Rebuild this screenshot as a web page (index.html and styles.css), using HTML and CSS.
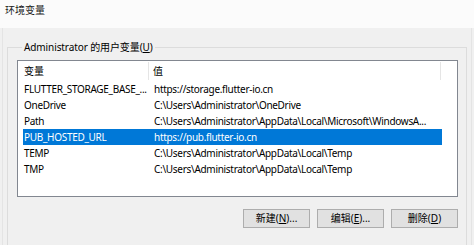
FILE: index.html
```html
<!DOCTYPE html>
<html lang="zh">
<head>
<meta charset="utf-8">
<title>环境变量</title>
<link rel="stylesheet" href="styles.css">
</head>
<body>
<div class="window">
  <div class="titlebar">环境变量</div>
  <div class="content">
    <fieldset class="group">
      <legend class="group-title">Administrator 的用户变量(<u>U</u>)</legend>
      <div class="list">
        <div class="list-header">
          <div class="col1">变量</div>
          <div class="col2">值</div>
          <div class="col-rest"></div>
        </div>
        <div class="row"><div class="col1">FLUTTER_STORAGE_BASE_...</div><div class="col2">https://storage.flutter-io.cn</div></div>
        <div class="row"><div class="col1">OneDrive</div><div class="col2">C:\Users\Administrator\OneDrive</div></div>
        <div class="row"><div class="col1">Path</div><div class="col2">C:\Users\Administrator\AppData\Local\Microsoft\WindowsA...</div></div>
        <div class="row selected"><div class="col1">PUB_HOSTED_URL</div><div class="col2">https://pub.flutter-io.cn</div></div>
        <div class="row"><div class="col1">TEMP</div><div class="col2">C:\Users\Administrator\AppData\Local\Temp</div></div>
        <div class="row"><div class="col1">TMP</div><div class="col2">C:\Users\Administrator\AppData\Local\Temp</div></div>
      </div>
      <div class="buttons">
        <button class="btn">新建(<u>N</u>)...</button>
        <button class="btn">编辑(<u>E</u>)...</button>
        <button class="btn">删除(<u>D</u>)</button>
      </div>
    </fieldset>
  </div>
</div>
</body>
</html>
```

FILE: styles.css
```css
* { box-sizing: border-box; }
html, body {
  margin: 0;
  padding: 0;
  width: 474px;
  height: 245px;
  overflow: hidden;
  background: #f0f0f0;
  font-family: "Noto Sans", "Noto Sans CJK SC", sans-serif;
  font-size: 10px;
  color: #000;
}
.window {
  height: 245px;
  background: #f0f0f0;
}
.titlebar {
  height: 28px;
  background: #fbfbfb;
  padding: 3px 0 0 5px;
  line-height: 14px;
  font-size: 10px;
  color: #1a1a1a;
}
.content {
  margin: 0 2px;
  height: 217px;
  border-left: 1px solid #e4e4e4;
  border-right: 1px solid #e4e4e4;
  padding: 12px 4px 0 4px;
}
.group {
  margin: 0;
  padding: 0 8px 0 9px;
  border: 1px solid #dcdcdc;
  border-bottom: none;
  height: 205px;
  min-width: 0;
}
.group-title {
  margin-left: 5px;
  padding: 0 2px;
  line-height: 14px;
  color: #000;
  letter-spacing: -0.1px;
}
.list {
  margin-top: 6px;
  height: 137px;
  background: #fff;
  border: 1px solid #828790;
  display: flex;
  flex-direction: column;
}
.list-header {
  height: 20px;
  flex: none;
  display: flex;
  align-items: stretch;
}
.list-header .col1 {
  width: 131px;
  padding-left: 6px;
  border-right: 1px solid #e5e5e5;
  margin: 1px 0;
  line-height: 18px;
}
.list-header .col2 {
  width: 292px;
  padding-left: 4px;
  border-right: 1px solid #e5e5e5;
  margin: 1px 0;
  line-height: 18px;
}
.list-header .col-rest { flex: 1; }
.row {
  height: 16px;
  flex: none;
  line-height: 16px;
  margin-left: 5px;
  width: 419px;
  display: flex;
  white-space: nowrap;
  letter-spacing: -0.3px;
}
.row .col1 {
  width: 126px;
  padding-left: 1px;
  overflow: hidden;
}
.row .col2 {
  flex: 1;
  padding-left: 5px;
  overflow: hidden;
}
.row.selected {
  background: #0078d7;
  color: #fff;
}
.buttons {
  margin-top: 12px;
  display: flex;
  justify-content: flex-end;
  gap: 7px;
}
.btn {
  width: 67px;
  height: 19px;
  margin: 0;
  padding: 0;
  background: #e1e1e1;
  border: 1px solid #adadad;
  border-radius: 0;
  font-family: "Noto Sans", "Noto Sans CJK SC", sans-serif;
  font-size: 10px;
  line-height: 17px;
  color: #000;
}
```
